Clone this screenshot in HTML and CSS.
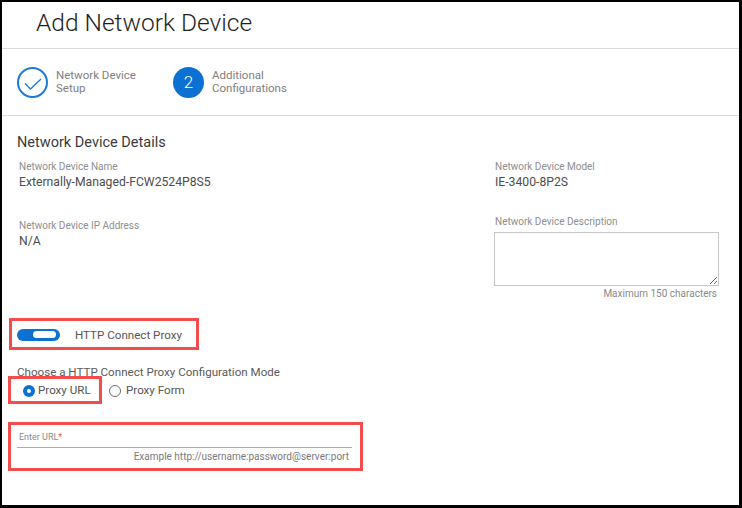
FILE: index.html
```html
<!DOCTYPE html>
<html>
<head>
<meta charset="utf-8">
<link rel="stylesheet" href="styles.css">
</head>
<body>
<div class="frame">
  <header class="header">
    <h1 class="title">Add Network Device</h1>
  </header>
  <nav class="stepper">
    <div class="step">
      <span class="circle done">
        <svg width="18" height="12" viewBox="0 0 18 12"><path d="M1 5.5 L6.5 11 L17 1" fill="none" stroke="#1b7cd4" stroke-width="1.3"/></svg>
      </span>
      <span class="step-text">Network Device<br>Setup</span>
    </div>
    <div class="step">
      <span class="circle active">2</span>
      <span class="step-text">Additional<br>Configurations</span>
    </div>
  </nav>
  <main class="content">
    <h2 class="section-title">Network Device Details</h2>
    <div class="details">
      <div class="col">
        <div class="field">
          <div class="label">Network Device Name</div>
          <div class="value">Externally-Managed-FCW2524P8S5</div>
        </div>
        <div class="field field-2">
          <div class="label">Network Device IP Address</div>
          <div class="value">N/A</div>
        </div>
      </div>
      <div class="col col-right">
        <div class="field">
          <div class="label">Network Device Model</div>
          <div class="value">IE-3400-8P2S</div>
        </div>
        <div class="field field-desc">
          <div class="label">Network Device Description</div>
          <textarea class="desc"></textarea>
          <div class="hint">Maximum 150 characters</div>
        </div>
      </div>
    </div>
    <div class="mark mark-toggle">
      <span class="toggle"><span class="toggle-knob"></span></span>
      <span class="toggle-label">HTTP Connect Proxy</span>
    </div>
    <div class="mode-title">Choose a HTTP Connect Proxy Configuration Mode</div>
    <div class="radios">
      <div class="mark mark-radio">
        <span class="radio checked"></span>
        <span class="radio-label">Proxy URL</span>
      </div>
      <div class="radio-item">
        <span class="radio"></span>
        <span class="radio-label">Proxy Form</span>
      </div>
    </div>
    <div class="mark mark-url">
      <div class="url-label">Enter URL<span class="req">*</span></div>
      <div class="url-line"></div>
      <div class="url-hint">Example http://username:password@server:port</div>
    </div>
  </main>
</div>
</body>
</html>
```

FILE: styles.css
```css
* { box-sizing: border-box; }
html, body { margin: 0; padding: 0; background: #fff; }
body { font-family: Roboto, "Liberation Sans", Arial, sans-serif; color: #4a4a4a; }

.frame {
  width: 742px;
  height: 508px;
  border-style: solid;
  border-color: #000;
  border-width: 2px 3px 3px 2px;
  overflow: hidden;
  background: #fff;
}

.header {
  height: 47px;
  border-bottom: 1px solid #dcdcdc;
  padding-left: 34px;
}
.title {
  margin: 0;
  font-size: 24.5px;
  font-weight: 300;
  line-height: 42px;
  color: #1f1f1f;
}

.stepper {
  height: 67px;
  border-bottom: 1px solid #dcdcdc;
  display: flex;
  align-items: center;
  padding-left: 15px;
}
.step {
  width: 156px;
  display: flex;
  align-items: center;
  gap: 8px;
}
.circle {
  width: 31px;
  height: 31px;
  border-radius: 50%;
  display: flex;
  align-items: center;
  justify-content: center;
  flex: none;
}
.circle.done { border: 2px solid #1b7cd4; padding-top: 3px; }
.circle.active { background: #0b72d3; color: #fff; font-size: 17px; font-weight: 300; }
.step-text {
  font-size: 11.5px;
  line-height: 13px;
  color: #808080;
}

.content { padding: 18px 0 0 15px; }
.section-title {
  margin: 0;
  font-size: 14.5px;
  font-weight: 400;
  line-height: 18px;
  color: #3a3a3a;
}
.details {
  display: grid;
  grid-template-columns: 476px 226px;
  margin: 9px 0 0 2px;
}
.label {
  font-size: 10px;
  line-height: 12px;
  color: #8e8e8e;
}
.value {
  font-size: 12.2px;
  line-height: 14px;
  color: #4d4d4d;
  margin-top: 2px;
}
.field-2 { margin-top: 31px; }
.field-desc { margin-top: 27px; }
.desc {
  display: block;
  width: 225px;
  height: 54px;
  margin: 4px 0 0 -1px;
  border: 1px solid #c8c8c8;
  border-radius: 0;
  resize: both;
  font: inherit;
}
.hint {
  font-size: 10px;
  line-height: 12px;
  color: #8a8a8a;
  text-align: right;
  width: 222px;
  margin-top: 2px;
}

.mark { border: 3px solid #f24c4c; }

.mark-toggle {
  width: 190px;
  height: 32px;
  margin: 18px 0 0 -8px;
  display: flex;
  align-items: center;
  padding-left: 5px;
  padding-top: 1px;
}
.toggle {
  width: 43px;
  height: 12px;
  border-radius: 6px;
  background: #0b72d3;
  display: flex;
  align-items: center;
  justify-content: flex-end;
  padding-right: 4px;
}
.toggle-knob {
  width: 23px;
  height: 7px;
  border-radius: 4px;
  background: #fff;
}
.toggle-label {
  margin-left: 15px;
  font-size: 11.6px;
  color: #555;
}

.mode-title {
  margin-top: 16px;
  font-size: 11.6px;
  line-height: 12px;
  color: #5a5a5a;
}
.radios {
  display: flex;
  align-items: center;
  margin-top: -2px;
  margin-left: -9px;
}
.mark-radio {
  width: 94px;
  height: 28px;
  display: flex;
  align-items: center;
  padding-left: 12px;
}
.radio-item { display: flex; align-items: center; margin-left: 7px; }
.radio {
  width: 12px;
  height: 12px;
  border-radius: 50%;
  border: 1px solid #6d6d6d;
  flex: none;
  margin-top: 2px;
}
.radio.checked {
  border: none;
  background: #0b72d3;
  display: flex;
  align-items: center;
  justify-content: center;
}
.radio.checked::after {
  content: "";
  width: 4px;
  height: 4px;
  border-radius: 50%;
  background: #fff;
}
.radio-label {
  margin-left: 3px;
  font-size: 11.6px;
  color: #555;
}
.radio-item .radio-label { margin-left: 5px; }

.mark-url {
  width: 355px;
  height: 49px;
  margin: 18px 0 0 -9px;
  padding: 6px 8px 0 6px;
}
.url-label {
  font-size: 9px;
  line-height: 12px;
  color: #8a8a8a;
  padding-left: 2px;
}
.req { color: #f24c4c; }
.url-line {
  margin-top: 4px;
  height: 1px;
  background: #a8adb3;
  border-bottom: 1px solid #a8adb3;
}
.url-hint {
  font-size: 10px;
  line-height: 12px;
  color: #7a7a7a;
  text-align: right;
  padding-right: 3px;
  margin-top: 3px;
}
```
